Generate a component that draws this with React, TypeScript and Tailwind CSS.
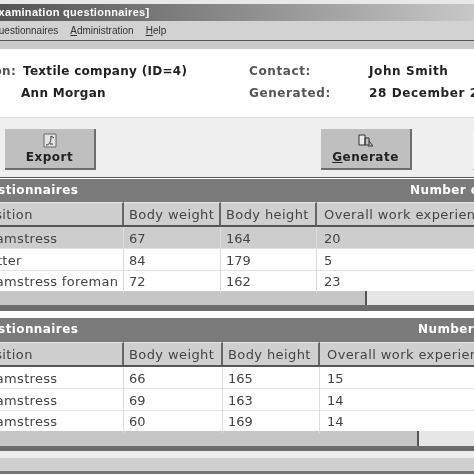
import React from 'react';

const tables = [
  {
    title: 'Questionnaires',
    number: 'Number of',
    titleWidth: 'w-[440px]',
    head: 'h-[23px]',
    tail: 'h-[6px]',
    scroll: 'h-[14px]',
    cols: 'grid-cols-[150px_97px_96px_1fr]',
    thumb: 'w-[393px]',
    rows: [
      { id: 'a1', name: 'Seamstress', w: '67', h: '164', x: '20', active: true },
      { id: 'a2', name: 'Cutter', w: '84', h: '179', x: '5' },
      { id: 'a3', name: 'Seamstress foreman', w: '72', h: '162', x: '23', last: true },
    ],
  },
  {
    title: 'Questionnaires',
    number: 'Number',
    titleWidth: 'w-[448px]',
    head: 'h-[24px]',
    tail: 'h-[5px]',
    scroll: 'h-[15px]',
    cols: 'grid-cols-[150px_99px_97px_1fr]',
    thumb: 'w-[445px]',
    rows: [
      { id: 'b1', name: 'Seamstress', w: '66', h: '165', x: '15' },
      { id: 'b2', name: 'Seamstress', w: '69', h: '163', x: '14' },
      { id: 'b3', name: 'Seamstress', w: '60', h: '169', x: '14', last: true },
    ],
  },
];

function ToolButton({ hot, rest, icon }: { hot?: string; rest: string; icon: React.ReactNode }) {
  return (
    <button className="w-[91px] h-[41px] shrink-0 flex flex-col items-center bg-[#bfbfbf] border-r-2 border-b-2 border-[#6e6e6e] text-[12px] font-bold text-[#222] tracking-[0.5px] leading-[14px]">
      <span className="h-[21px] flex items-center pt-[2px]">{icon}</span>
      <span>
        {hot && <span className="underline">{hot}</span>}
        {rest}
      </span>
    </button>
  );
}

function DataTable({ table }: { table: (typeof tables)[0] }) {
  return (
    <section>
      <div className={`${table.head} pb-[2px] bg-[#7b7b7b] flex items-center text-white font-bold text-[12px] tracking-[0.4px] whitespace-nowrap`}>
        <span className={`${table.titleWidth} -ml-[4px] shrink-0`}>{table.title}</span>
        <span>{table.number}</span>
      </div>
      <div className={`grid ${table.cols} h-[25px] bg-[#cfcfcf] text-[#444] text-[13px] border-b-2 border-[#555]`}>
        {['Position', 'Body weight', 'Body height', 'Overall work experience'].map((h, i) => (
          <div key={h} className={`${i === 3 ? 'pl-[7px]' : 'pl-[5px]'} border-r-2 border-[#666] border-t border-t-[#e4e4e4] whitespace-nowrap overflow-hidden leading-[24px] tracking-[0.4px]`}>
            {h}
          </div>
        ))}
      </div>
      {table.rows.map((r) => (
        <div key={r.id} className={`grid ${table.cols} ${r.last ? 'h-[20px] leading-[22px]' : 'h-[22px] border-b border-[#e2e2e2] leading-[24px]'} text-[13px] text-[#444] ${r.active ? 'bg-[#cdcdcd]' : 'bg-white'}`}>
          <div className="pl-[5px] border-r border-[#ddd] whitespace-nowrap tracking-[0.3px]">{r.name}</div>
          <div className="pl-[5px] border-r border-[#ddd]">{r.w}</div>
          <div className="pl-[5px] border-r border-[#ddd]">{r.h}</div>
          <div className="pl-[7px]">{r.x}</div>
        </div>
      ))}
      <div className={`${table.scroll} bg-[#e6e6e6]`}>
        <div className={`${table.thumb} h-full bg-[#c6c6c6] border-r-2 border-[#555]`} />
      </div>
      <div className={`${table.tail} bg-[#6c6c6c]`} />
    </section>
  );
}

export default function App() {
  return (
    <div className="w-[474px] h-[474px] overflow-hidden bg-white blur-[0.5px]" style={{ fontFamily: '"DejaVu Sans", sans-serif' }}>
      <div className="w-[560px] -ml-[26px]">
        <div className="h-[4px] bg-[#e8e8e8]" />
        <div className="w-[500px] h-[17px] bg-gradient-to-r from-[#4e4e4e] to-[#c8c8c8] text-white text-[11px] font-bold leading-[17px] pl-[13px] tracking-[0.3px] whitespace-nowrap" style={{ fontFamily: '"Liberation Sans", sans-serif' }}>
          [Examination questionnaires]
        </div>
        <div className="h-[19px] bg-[#d2d2d2] flex items-center gap-[12px] text-[10px] text-[#333] pl-[17px]" style={{ fontFamily: '"Liberation Sans", sans-serif' }}>
          <span>Questionnaires</span>
          <span><span className="underline">A</span>dministration</span>
          <span><span className="underline">H</span>elp</span>
        </div>
        <div className="h-[1px] bg-[#555]" />
        <div className="h-[8px] bg-[#cacaca]" />
        <div className="h-[68px] pb-[2px] bg-white grid grid-cols-[275px_120px_1fr] items-center content-center gap-y-[4px] text-[12px] font-bold text-[#222]">
          <div className="flex whitespace-nowrap tracking-[0.3px]">
            <span className="w-[49px] pr-[7px] flex justify-end shrink-0 text-[#555]">
              <span className="shrink-0">Position:</span>
            </span>
            <span>Textile company (ID=4)</span>
          </div>
          <div className="text-[#555] tracking-[0.6px]">Contact:</div>
          <div className="tracking-[0.6px]">John Smith</div>
          <div className="pl-[47px] tracking-[0.3px]">Ann Morgan</div>
          <div className="text-[#555] tracking-[0.6px]">Generated:</div>
          <div className="whitespace-nowrap tracking-[0.6px]">28 December 2001</div>
        </div>
        <div className="h-[60px] pt-[3px] bg-[#efefef] border-t border-[#dcdcdc] flex items-center pl-[31px]">
          <ToolButton
            rest="Export"
            icon={
              <svg width="14" height="15" viewBox="0 0 14 15" fill="none" stroke="#333" strokeWidth="1">
                <path d="M1 1h12v13H1z" fill="#e4e4e4" stroke="#666" />
                <path d="M3 12c3 0 5-2 5-9l3 2M7 11h3" />
              </svg>
            }
          />
          <div className="w-[225px] shrink-0" />
          <ToolButton
            hot="G"
            rest="enerate"
            icon={
              <svg width="16" height="13" viewBox="0 0 16 13" fill="none" stroke="#333" strokeWidth="1">
                <path d="M1 1h6v10H1z" fill="#e8e8e8" />
                <path d="M7 4h4v7H7zM11 7l4 5M10 12h5" />
              </svg>
            }
          />
          <div className="w-[61px] shrink-0" />
          <div className="w-[20px] h-[41px] bg-[#f8f8f8] border-b border-[#999]" />
        </div>
        <div className="h-[1px] bg-[#555]" />
        <div className="h-[1px] bg-white" />
        {tables.map((t, i) => (
          <div key={i} className={i ? 'mt-[7px]' : ''}>
            <DataTable table={t} />
          </div>
        ))}
        <div className="h-[7px] bg-[#eeeeee]" />
        <div className="h-[13px] bg-[#cfcfcf]" />
        <div className="h-[4px] bg-[#777]" />
      </div>
    </div>
  );
}
